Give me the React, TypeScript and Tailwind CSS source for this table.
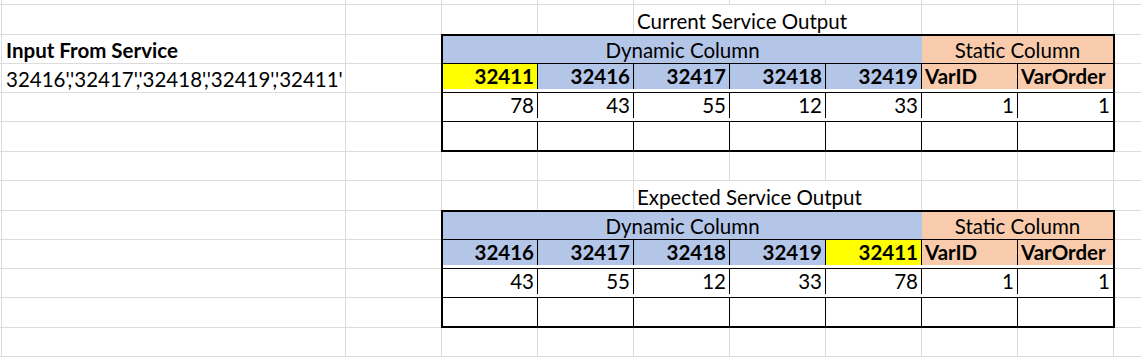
import type { ReactNode } from "react";

// plain spreadsheet cell with light gridlines
function Cell({ children, last, className = "" }: { children?: ReactNode; last?: boolean; className?: string }) {
  return (
    <div
      className={`flex items-end whitespace-nowrap border-b border-[#dcdcdc] pb-px leading-[24px] ${
        last ? "" : "border-r"
      } ${className}`}
    >
      {children}
    </div>
  );
}

function EmptyRow() {
  return (
    <>
      {Array.from({ length: 10 }).map((_, i) => (
        <Cell key={i} />
      ))}
      <Cell last />
    </>
  );
}

function TitleRow({ title }: { title: string }) {
  return (
    <>
      <Cell />
      <Cell />
      <Cell />
      <Cell />
      <Cell />
      <Cell className="col-span-3 pl-[3px]">{title}</Cell>
      <Cell />
      <Cell />
      <Cell last />
    </>
  );
}

function SideRow({ children, bold }: { children?: ReactNode; bold?: boolean }) {
  return (
    <>
      <Cell />
      <Cell className={`pl-[4px] ${bold ? "font-bold" : ""}`}>{children}</Cell>
      <Cell />
      <Cell last />
    </>
  );
}

type Head = { label: string; bg: string; left?: boolean };

// table cell with thin black lines
function TCell({ children, right = true, edge, bg = "bg-white", bold }: {
  children?: ReactNode;
  right?: boolean;
  edge?: boolean;
  bg?: string;
  bold?: boolean;
}) {
  return (
    <div
      className={`flex items-end border-black pb-px leading-[24px] ${edge ? "" : "border-r"} ${
        right ? "justify-end pr-[3px]" : "justify-start pl-[3px]"
      } ${bold ? "font-bold" : ""} ${bg}`}
    >
      {children}
    </div>
  );
}

function OutputTable({ heads, values, className }: { heads: Head[]; values: string[]; className: string }) {
  return (
    <div
      className={`-mt-px -ml-px -mr-px grid grid-cols-[95px_96px_96px_96px_96px_96px_95px] grid-rows-[28px_29px_29px_28px] border-2 border-black bg-white ${className}`}
    >
      <div className="col-span-5 flex items-end justify-center border-b border-black bg-[#b4c6e7] pb-px leading-[24px]">
        Dynamic Column
      </div>
      <div className="col-span-2 flex items-end justify-center border-b border-black bg-[#f8cbad] pb-px leading-[24px]">
        Static Column
      </div>
      {heads.map((h, i) => (
        <div key={h.label} className="border-b border-black">
          <div className="h-full">
            <TCell bold bg={h.bg} right={!h.left} edge={i === heads.length - 1}>
              {h.label}
            </TCell>
          </div>
        </div>
      ))}
      {values.map((v, i) => (
        <div key={i} className="border-b border-black">
          <div className="h-full">
            <TCell edge={i === values.length - 1}>{v}</TCell>
          </div>
        </div>
      ))}
      {values.map((_, i) => (
        <TCell key={i} edge={i === values.length - 1} />
      ))}
    </div>
  );
}

const blue = "bg-[#b4c6e7]";
const yellow = "bg-[#ffff00]";
const peach = "bg-[#f8cbad]";

export default function App() {
  return (
    <div className="h-[357px] w-[1141px] overflow-hidden bg-white text-[20.5px] text-black font-['Lato',sans-serif]">
      <div className="grid grid-cols-[2px_344px_96px_96px_96px_96px_96px_96px_96px_96px_27px] grid-rows-[5px_30px_29px_29px_29px_30px_29px_30px_29px_29px_29px_30px_29px]">
        <EmptyRow />
        <TitleRow title="Current Service Output" />
        <SideRow bold>Input From Service</SideRow>
        <SideRow>32416','32417','32418','32419','32411'</SideRow>
        <SideRow />
        <SideRow />
        <EmptyRow />
        <TitleRow title="Expected Service Output" />
        <SideRow />
        <SideRow />
        <SideRow />
        <SideRow />
        <EmptyRow />

        <OutputTable
          className="col-start-4 col-span-7 row-start-3 row-span-4"
          heads={[
            { label: "32411", bg: yellow },
            { label: "32416", bg: blue },
            { label: "32417", bg: blue },
            { label: "32418", bg: blue },
            { label: "32419", bg: blue },
            { label: "VarID", bg: peach, left: true },
            { label: "VarOrder", bg: peach, left: true },
          ]}
          values={["78", "43", "55", "12", "33", "1", "1"]}
        />
        <OutputTable
          className="col-start-4 col-span-7 row-start-9 row-span-4"
          heads={[
            { label: "32416", bg: blue },
            { label: "32417", bg: blue },
            { label: "32418", bg: blue },
            { label: "32419", bg: blue },
            { label: "32411", bg: yellow },
            { label: "VarID", bg: peach, left: true },
            { label: "VarOrder", bg: peach, left: true },
          ]}
          values={["43", "55", "12", "33", "78", "1", "1"]}
        />
      </div>
    </div>
  );
}
